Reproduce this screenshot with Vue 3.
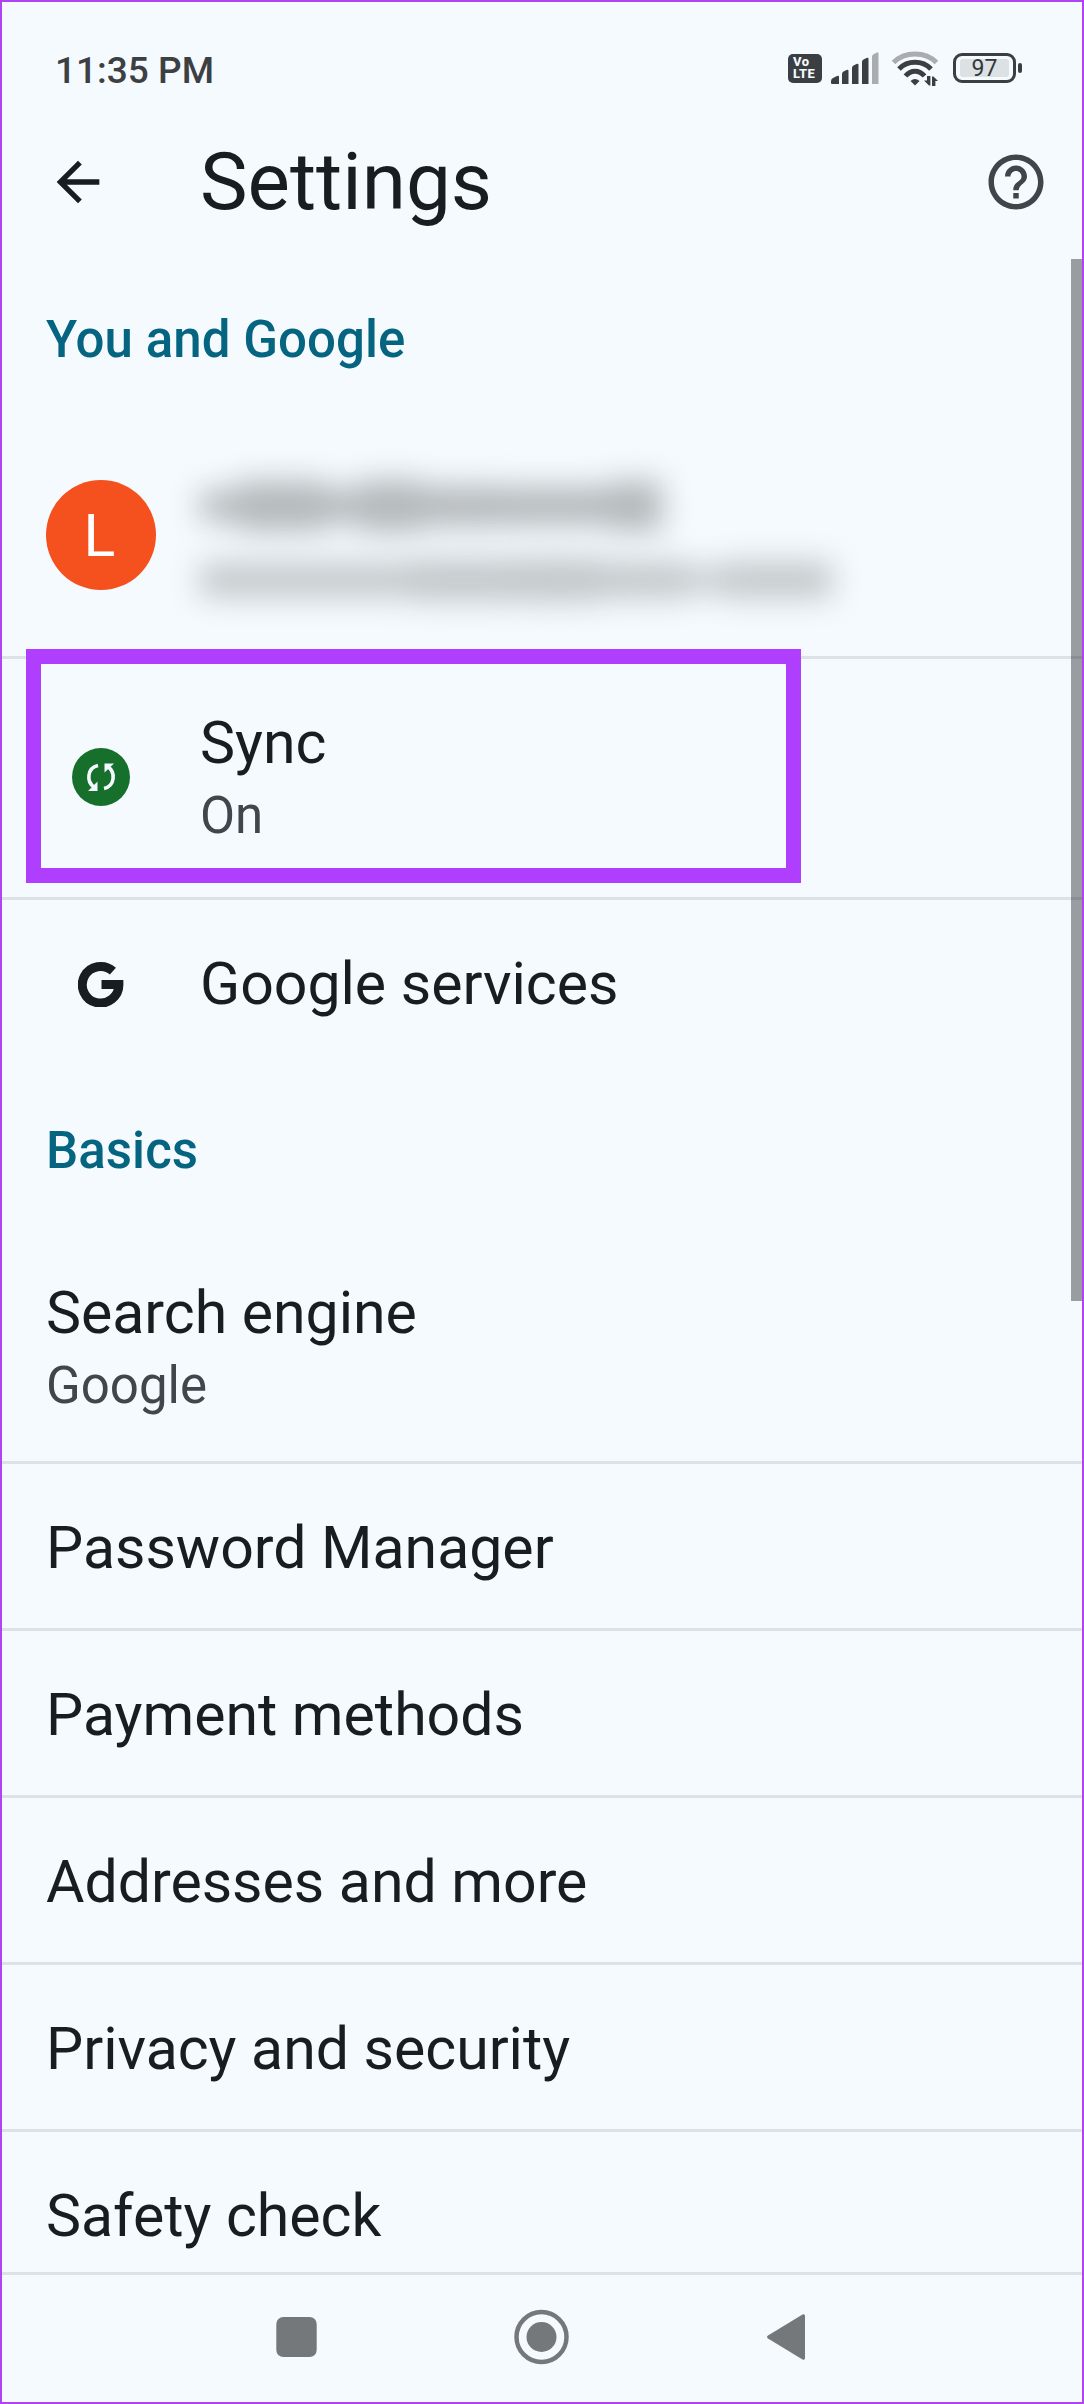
<template>
  <div class="screen">
    <!-- status bar -->
    <header class="status-bar">
      <span class="clock">11:35 PM</span>
      <div class="status-icons">
        <span class="volte"><span>Vo</span><span>LTE</span></span>
        <svg class="signal" width="50" height="32" viewBox="0 0 50 32">
          <path d="M1 32q-1 0-1-1v-2q0-2 2-3l4-2q2-1 2 1v7z" />
          <path d="M11 32V22q0-2 1.500-2.500l3-1.500q2-1 2 1v13z" />
          <path d="M21 32V16q0-2 1.500-2.500l3-1.500q2-1 2 1v19z" />
          <path d="M31 32V10q0-2 1.500-2.500l3-1.500q2-1 2 1v25z" />
          <path class="faded" d="M41 32V5q0-2 1.500-2.700l3-1.600q2-1 2 1V32z" />
        </svg>
        <svg class="wifi" width="48" height="36" viewBox="0 0 48 36">
          <g fill="none" stroke-width="5">
            <path class="faded-line" d="M2.500 12.500Q11 4 24 4t21.500 8.500" />
            <path d="M8 19Q14.500 12.300 24 12.300T40 19" />
            <path d="M14.500 26Q18.500 21.300 24 21.300T33.500 26" />
          </g>
          <path d="M19.500 31q4.500-4 9 0L24 35.500z" />
          <path d="M36 26h3.400v9.500H38l-5-5h3zM41 36v-9.500h1.500l4.500 4.500h-2.600v5z" />
        </svg>
        <span class="battery">
          <span class="battery-body"><span class="battery-fill">97</span></span>
          <span class="battery-tip"></span>
        </span>
      </div>
    </header>

    <!-- title bar -->
    <div class="toolbar">
      <svg class="back" width="64" height="64" viewBox="0 0 24 24">
        <path d="M7.825 13l5.600 5.600L12 20l-8-8 8-8 1.425 1.400L7.825 11H20v2z" />
      </svg>
      <h1>Settings</h1>
      <svg class="help" width="66" height="66" viewBox="0 0 24 24">
        <path d="M11 18h2v-2h-2v2zm1-16C6.480 2 2 6.480 2 12s4.480 10 10 10 10-4.480 10-10S17.520 2 12 2zm0 18c-4.410 0-8-3.590-8-8s3.590-8 8-8 8 3.590 8 8-3.590 8-8 8zm0-14c-2.210 0-4 1.790-4 4h2c0-1.100.9-2 2-2s2 .9 2 2c0 2-3 1.750-3 5h2c0-2.250 3-2.500 3-5 0-2.210-1.790-4-4-4z" />
      </svg>
    </div>

    <main class="content">
      <h2 class="section-title">You and Google</h2>

      <div class="account">
        <div class="avatar">L</div>
        <div class="account-info" aria-hidden="true">
          <div class="smudge name">
            <i v-for="(b, i) in nameBlocks" :key="i" :style="{ width: b.w + 'px', height: b.h + 'px' }"></i>
          </div>
          <div class="smudge mail">
            <i v-for="(b, i) in mailBlocks" :key="i" :style="{ width: b.w + 'px', height: b.h + 'px' }"></i>
          </div>
        </div>
      </div>

      <div class="item sync">
        <div class="highlight"></div>
        <div class="item-icon">
          <svg width="58" height="58" viewBox="0 0 58 58">
            <circle cx="29" cy="29" r="29" fill="#176f2c" />
            <g fill="none" stroke="#f5fafe" stroke-width="3.600">
              <path d="M26 17.500C15 20 14 34 22.500 39.500" />
              <path d="M32 40.500C43 38 44 24 35.500 18.500" />
            </g>
            <path fill="#f5fafe" d="M25.500 33.500V43H16zM32.500 24.500V15.500H42z" />
          </svg>
        </div>
        <div class="item-text">
          <span class="item-title">Sync</span>
          <span class="item-sub">On</span>
        </div>
      </div>

      <div class="item services">
        <div class="item-icon">
          <svg width="46" height="46" viewBox="0 0 46 46">
            <path fill="none" stroke="#171d21" stroke-width="9" d="M34.900 10.200A18.300 18.300 0 1 0 40.900 23.500H23.500" />
          </svg>
        </div>
        <span class="item-title">Google services</span>
      </div>

      <h2 class="section-title basics">Basics</h2>

      <div class="item engine">
        <div class="item-text">
          <span class="item-title">Search engine</span>
          <span class="item-sub">Google</span>
        </div>
      </div>

      <div v-for="label in basics" :key="label" class="item row">
        <span class="item-title">{{ label }}</span>
      </div>

      <div class="scrollbar"></div>
    </main>

    <!-- navigation buttons -->
    <nav class="nav-bar">
      <svg width="56" height="56" viewBox="0 0 56 56">
        <rect x="8.300" y="8" width="40.400" height="40" rx="7" />
      </svg>
      <svg width="56" height="56" viewBox="0 0 56 56">
        <circle cx="28.500" cy="28" r="25" fill="none" stroke="#75787b" stroke-width="4.500" />
        <circle cx="28.500" cy="28" r="15" />
      </svg>
      <svg width="56" height="56" viewBox="0 0 56 56">
        <path d="M10 26.500 44.500 5.500Q47 4.500 47 7v42q0 2.500-2.500 1.500L10 29.500q-2-1.500 0-3z" />
      </svg>
    </nav>
  </div>
</template>

<script setup>
import { ref } from 'vue'

const basics = ref([
  'Password Manager',
  'Payment methods',
  'Addresses and more',
  'Privacy and security',
  'Safety check'
])

// sizes of the blurred words
const nameBlocks = [
  { w: 38, h: 30 },
  { w: 88, h: 50 },
  { w: 34, h: 34 },
  { w: 60, h: 52 },
  { w: 80, h: 40 },
  { w: 110, h: 38 },
  { w: 52, h: 50 }
]
const mailBlocks = [
  { w: 210, h: 34 },
  { w: 110, h: 42 },
  { w: 80, h: 44 },
  { w: 90, h: 36 },
  { w: 30, h: 22 },
  { w: 112, h: 36 }
]
</script>

<style>
body {
  margin: 0;
  background-color: #f5fafe;
}
</style>

<style scoped>
.screen {
  box-sizing: border-box;
  width: 1084px;
  height: 2404px;
  border: 2px solid #ae44f2;
  background-color: #f5fafe;
  color: #171d21;
  font-family: Roboto, "Liberation Sans", sans-serif;
  display: flex;
  flex-direction: column;
  overflow: hidden;
}

h1,
h2 {
  margin: 0;
}

/* status bar */
.status-bar {
  flex: none;
  height: 132px;
  box-sizing: border-box;
  padding: 0 60px 0 53px;
  display: flex;
  justify-content: space-between;
  align-items: center;
}

.clock {
  padding-top: 5px;
  font-size: 37px;
  font-weight: 500;
  color: #3c4043;
}

.status-icons {
  display: flex;
  align-items: center;
  fill: #3b3f43;
  stroke: none;
}

.volte {
  width: 34px;
  height: 29px;
  border-radius: 5px;
  background-color: #3b3f43;
  color: #f5fafe;
  font-size: 13px;
  line-height: 12px;
  letter-spacing: 0.4px;
  font-weight: 800;
  display: flex;
  flex-direction: column;
  justify-content: center;
  padding-left: 5px;
  box-sizing: border-box;
  margin-right: 9px;
}

.signal {
  margin-right: 10px;
}

.faded {
  fill: #a9adb0;
}

.wifi g {
  stroke: #3b3f43;
}

.wifi .faded-line {
  stroke: #a9adb0;
}

.battery {
  display: flex;
  align-items: center;
  margin-left: 14px;
}

.battery-body {
  box-sizing: border-box;
  width: 63px;
  height: 30px;
  border: 3px solid #3b3f43;
  border-radius: 9px;
  padding: 3px 4px;
  display: flex;
}

.battery-fill {
  flex: 1;
  border-radius: 3px;
  background-color: #dce1e4;
  color: #33373a;
  font-size: 23px;
  line-height: 19px;
  text-align: center;
}

.battery-tip {
  width: 4px;
  height: 10px;
  border-radius: 2px;
  background-color: #3b3f43;
  margin-left: 2px;
}

/* title bar */
.toolbar {
  flex: none;
  height: 96px;
  padding: 0 33px 0 44px;
  display: flex;
  align-items: center;
}

.back {
  fill: #171d21;
}

.help {
  fill: #40454b;
}

.toolbar h1 {
  flex: 1;
  margin-left: 90px;
  font-size: 80px;
  line-height: 96px;
  font-weight: 400;
}

.content {
  flex: 1;
  position: relative;
  overflow: hidden;
  display: flex;
  flex-direction: column;
}

.section-title {
  flex: none;
  height: 59px;
  line-height: 60px;
  margin-top: 80px;
  padding-left: 44px;
  font-size: 51px;
  font-weight: 500;
  letter-spacing: 0.05px;
  color: #05647f;
}

.section-title.basics {
  margin-top: 54px;
}

/* account */
.account {
  flex: none;
  box-sizing: border-box;
  height: 290px;
  border-bottom: 3px solid #dce2e7;
  padding: 111px 0 0 44px;
  display: flex;
  align-items: flex-start;
}

.avatar {
  flex: none;
  box-sizing: border-box;
  width: 110px;
  height: 110px;
  padding-right: 3px;
  border-radius: 50%;
  background-color: #f5511e;
  color: #fff;
  font-size: 59px;
  line-height: 111px;
  text-align: center;
}

.account-info {
  height: 144px;
  display: flex;
  flex-direction: column;
  margin-left: 44px;
}

.smudge {
  display: flex;
  align-items: center;
  filter: blur(15px);
}

.smudge i {
  background-color: #b3b8bb;
}

.smudge.mail {
  margin-top: 26px;
}

.smudge.mail i {
  background-color: #c2c7ca;
}

/* list items */
.item {
  flex: none;
  box-sizing: border-box;
  position: relative;
  border-bottom: 3px solid #dce2e7;
  padding-left: 44px;
  display: flex;
  align-items: center;
}

.item-icon {
  width: 110px;
  margin-right: 44px;
  display: flex;
  justify-content: center;
}

.item-text {
  display: flex;
  flex-direction: column;
}

.item-title {
  font-size: 59px;
  line-height: 78px;
  letter-spacing: -0.02px;
}

.item-sub {
  font-size: 51px;
  line-height: 68px;
  color: #40464b;
}

.sync {
  height: 241px;
  padding-bottom: 3px;
}

.highlight {
  position: absolute;
  left: 24px;
  top: -10px;
  width: 745px;
  height: 204px;
  border: 15px solid #b03eff;
  z-index: 1;
}

.services {
  height: 167px;
  border-bottom: none;
}

.engine {
  height: 284px;
  padding-top: 53px;
}

.row {
  height: 167px;
  padding-top: 3px;
}

.scrollbar {
  position: absolute;
  top: 29px;
  right: 0;
  width: 11px;
  height: 1042px;
  background-color: rgba(3, 6, 12, 0.38);
}

/* navigation buttons */
.nav-bar {
  flex: none;
  height: 130px;
  box-sizing: border-box;
  border-top: 3px solid #dce2e7;
  padding: 0 268px 3px 266px;
  display: flex;
  justify-content: space-between;
  align-items: center;
  fill: #75787b;
}
</style>
